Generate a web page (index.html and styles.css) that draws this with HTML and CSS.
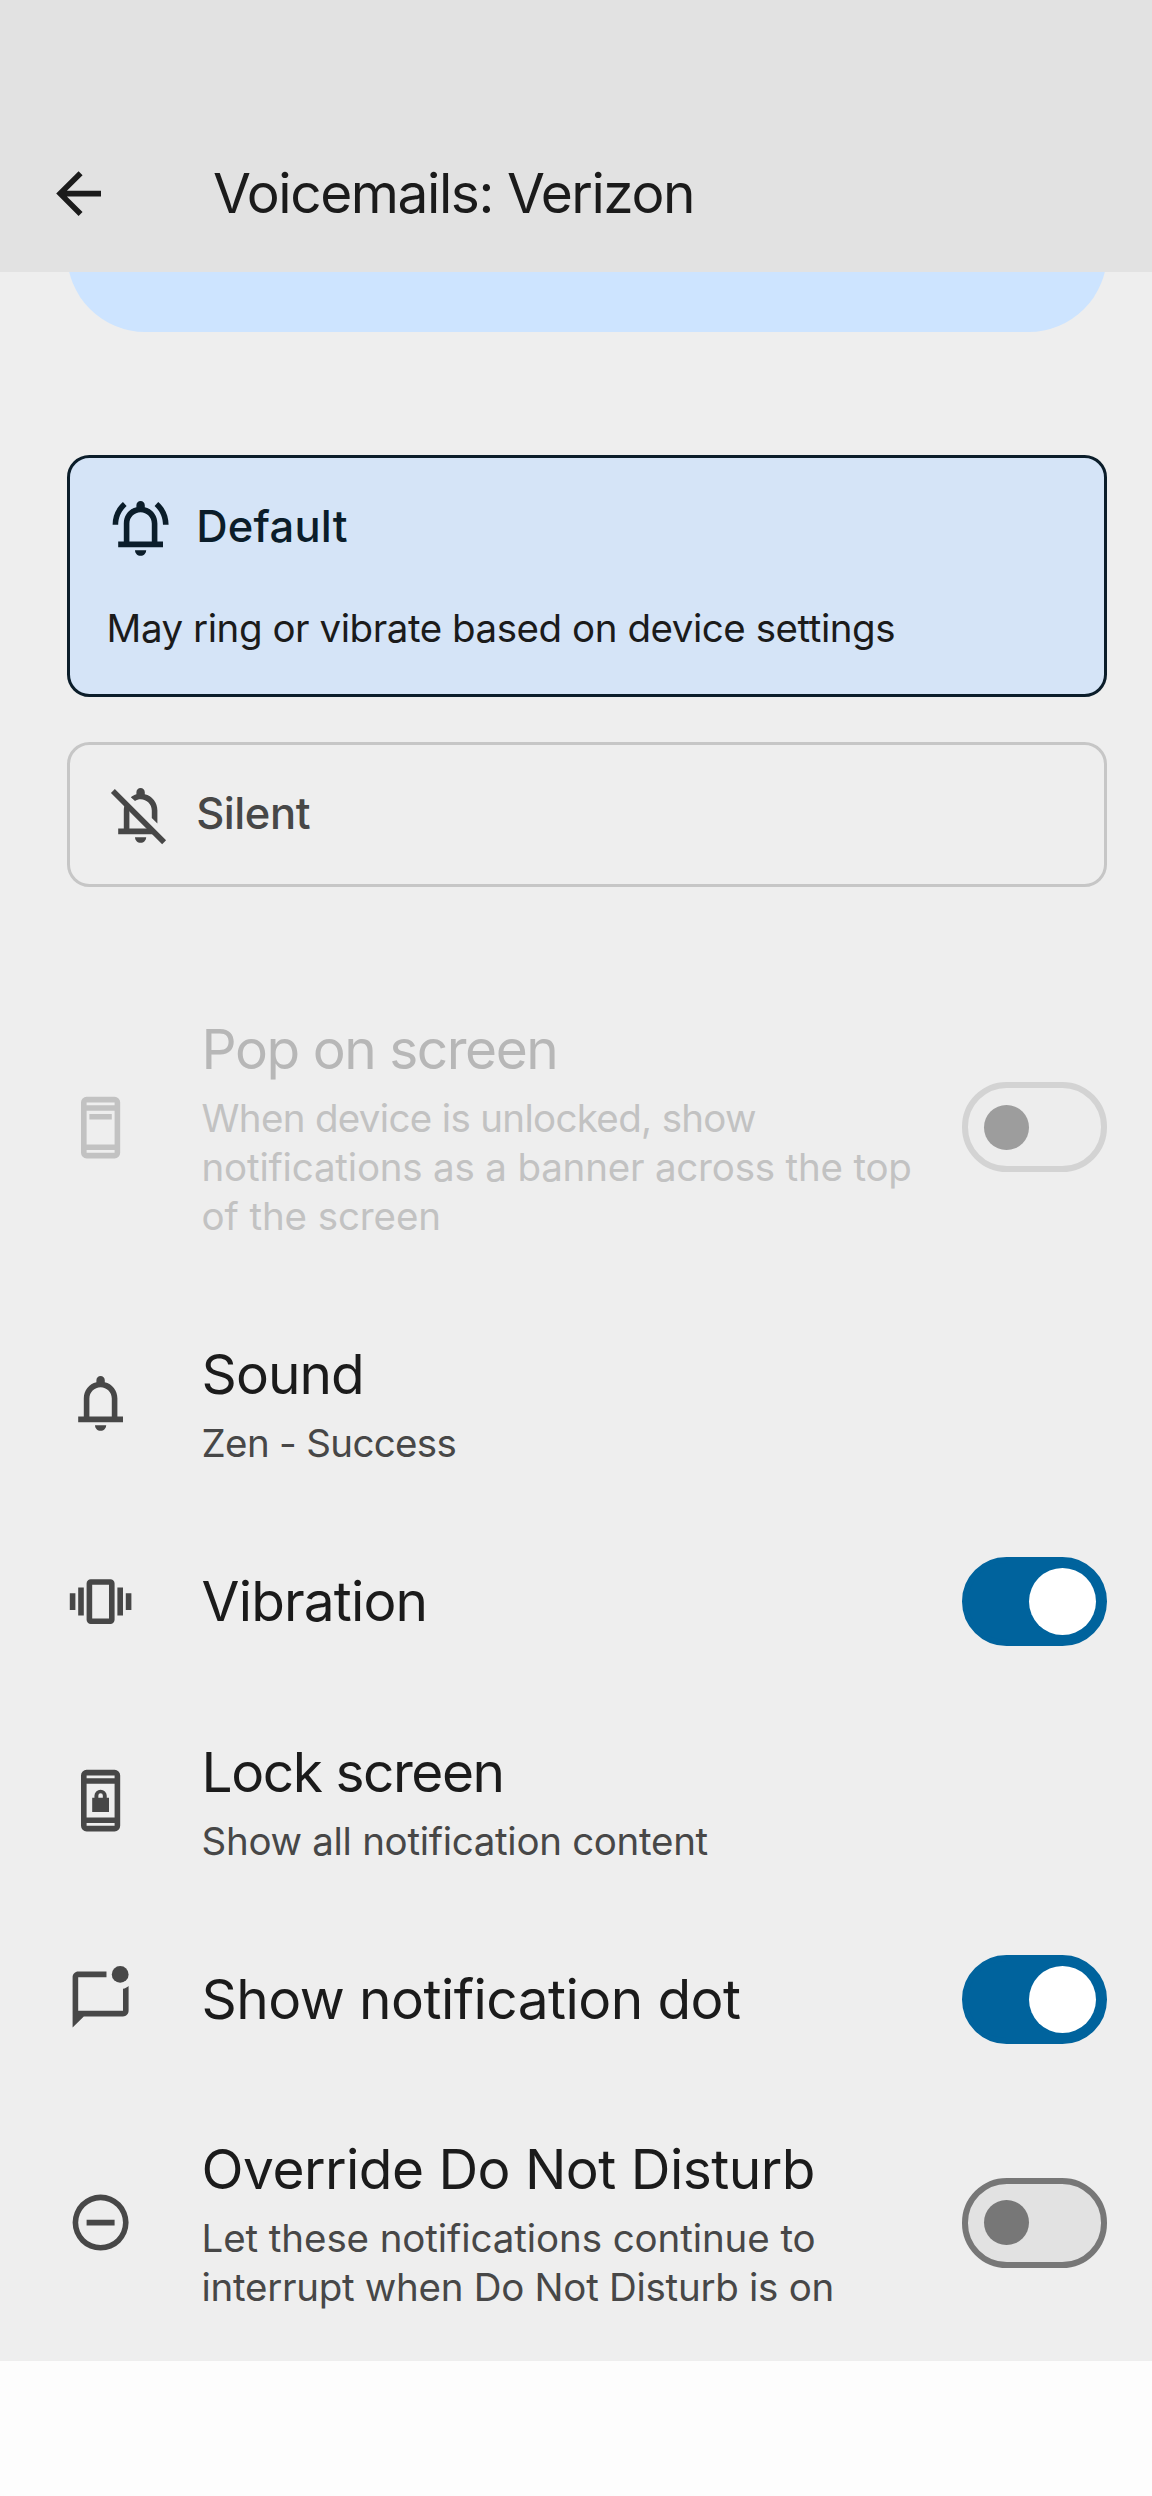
FILE: index.html
```html
<!DOCTYPE html>
<html lang="en">
<head>
<meta charset="utf-8">
<title>Voicemails: Verizon</title>
<link rel="stylesheet" href="styles.css">
</head>
<body>
<header class="app-bar">
  <svg class="icon" viewBox="0 0 24 24"><path d="M20 11H7.83l5.59-5.59L12 4l-8 8 8 8 1.41-1.41L7.83 13H20z"/></svg>
  <h1 class="app-title">Voicemails: Verizon</h1>
</header>
<main class="content">
  <div class="main-switch"></div>

  <section class="choices">
    <div class="choice choice-selected">
      <div class="choice-head">
        <svg class="icon" viewBox="0 0 24 24">
          <path d="M12 22.1c1.1 0 2-.9 2-2h-4c0 1.100.9 2 2 2zM18 17v-6.500c0-2.900-1.900-5.200-4.500-5.800V4c0-.83-.67-1.500-1.500-1.500s-1.500.67-1.500 1.500v.7C7.900 5.300 6 7.600 6 10.500V17H4v2h16v-2zM16 17H8v-6.500c0-2.200 1.800-4 4-4s4 1.800 4 4z"/>
          <path d="M2 11c0-3.300 1.400-6.200 3.700-8.100L7 4.300C5.200 5.900 4 8.300 4 11zM22 11c0-3.300-1.400-6.200-3.700-8.100L17 4.300c1.800 1.600 3 4 3 6.700z"/>
        </svg>
        <span class="choice-title ls-default">Default</span>
      </div>
      <p class="choice-text">May ring or vibrate based on device settings</p>
    </div>
    <div class="choice">
      <div class="choice-head">
        <svg class="icon" viewBox="0 0 24 24">
          <path d="M12 22.100c1.100 0 2-.9 2-2h-4c0 1.100.9 2 2 2z"/>
          <path d="M2.800 2.900 21.100 21.200l-1.400 1.400L1.400 4.300z"/>
          <path d="M4 19v-2h2v-6.500c0-.7.1-1.400.4-2L8 10.100V17h6.800l2 2z"/>
          <path d="M8.500 5.800c.6-.5 1.300-.9 2-1.100V4c0-.83.67-1.500 1.500-1.500s1.500.67 1.500 1.500v.7c2.600.6 4.500 2.900 4.500 5.800v4.700l-2-2v-2.700c0-2.200-1.800-4-4-4-.75 0-1.400.2-2 .6z"/>
        </svg>
        <span class="choice-title ls-silent">Silent</span>
      </div>
    </div>
  </section>

  <section class="settings">
    <div class="row row-three disabled">
      <svg class="icon" viewBox="0 0 24 24"><path fill-rule="evenodd" d="M7 1h10a2 2 0 0 1 2 2v18a2 2 0 0 1-2 2H7a2 2 0 0 1-2-2V3a2 2 0 0 1 2-2zM7 3v1h10V3zM7 6v12h10V6zM7 20v1h10v-1zM8 7.100h8v2H8z"/></svg>
      <div class="labels">
        <div class="title ls-pop">Pop on screen</div>
        <div class="summary"><span class="ls-when">When device is unlocked, show</span><br><span class="ls-notif">notifications as a banner across the top</span><br><span class="ls-of">of the screen</span></div>
      </div>
      <div class="switch"><span class="thumb"></span></div>
    </div>

    <div class="row row-two">
      <svg class="icon" viewBox="0 0 24 24"><path d="M12 22.100c1.100 0 2-.9 2-2h-4c0 1.100.9 2 2 2zM18 17v-6.500c0-2.900-1.900-5.200-4.500-5.800V4c0-.83-.67-1.500-1.500-1.500s-1.500.67-1.500 1.500v.7C7.900 5.300 6 7.600 6 10.500V17H4v2h16v-2zM16 17H8v-6.500c0-2.200 1.800-4 4-4s4 1.800 4 4z"/></svg>
      <div class="labels">
        <div class="title ls-sound">Sound</div>
        <div class="summary ls-zen">Zen - Success</div>
      </div>
    </div>

    <div class="row row-one">
      <svg class="icon" viewBox="0 0 24 24"><path fill-rule="evenodd" d="M8.500 4h7A1.500 1.500 0 0 1 17 5.500v13a1.500 1.500 0 0 1-1.500 1.500h-7A1.500 1.500 0 0 1 7 18.500v-13A1.500 1.500 0 0 1 8.500 4zM9 6v12h6V6zM4 7h2v10H4zM18 7h2v10h-2zM1 9h2v6H1zM21 9h2v6h-2z"/></svg>
      <div class="labels"><div class="title ls-vibration">Vibration</div></div>
      <div class="switch on"><span class="thumb"></span></div>
    </div>

    <div class="row row-two">
      <svg class="icon" viewBox="0 0 24 24"><path fill-rule="evenodd" d="M7 1h10a2 2 0 0 1 2 2v18a2 2 0 0 1-2 2H7a2 2 0 0 1-2-2V3a2 2 0 0 1 2-2zM7 3v1h10V3zM7 6v12h10V6zM7 20v1h10v-1zM9 11h.8v-.7a2.200 2.200 0 0 1 4.400 0v.7h.8v5.100H9zM11.200 11h1.600v-.8a.8.8 0 0 0-1.600 0z"/></svg>
      <div class="labels">
        <div class="title ls-lock">Lock screen</div>
        <div class="summary ls-showall">Show all notification content</div>
      </div>
    </div>

    <div class="row row-one">
      <svg class="icon" viewBox="0 0 24 24"><path d="M2 22V4c0-1.100.9-2 2-2h10.100v2H4v12h16V8.100c.75-.15 1.400-.5 2-1V16c0 1.100-.9 2-2 2H6z"/><circle cx="19" cy="3" r="3"/></svg>
      <div class="labels"><div class="title ls-dot">Show notification dot</div></div>
      <div class="switch on"><span class="thumb"></span></div>
    </div>

    <div class="row row-dnd">
      <svg class="icon" viewBox="0 0 24 24"><path fill-rule="evenodd" d="M12 2a10 10 0 1 0 0 20 10 10 0 0 0 0-20zM12 4a8 8 0 1 1 0 16 8 8 0 0 1 0-16zM7 11h10v2H7z"/></svg>
      <div class="labels">
        <div class="title ls-override">Override Do Not Disturb</div>
        <div class="summary"><span class="ls-let">Let these notifications continue to</span><br><span class="ls-interrupt">interrupt when Do Not Disturb is on</span></div>
      </div>
      <div class="switch"><span class="thumb"></span></div>
    </div>
  </section>
</main>
</body>
</html>
```
FILE: styles.css
```css
* { box-sizing: border-box; }

body {
  margin: 0;
  height: 2496px;
  background: #fdfdfd;
  color: #1b1b1b;
  font-family: Inter, Roboto, sans-serif;
  overflow: hidden;
}

.icon {
  width: 67.2px;
  height: 67.2px;
  flex: none;
  overflow: visible;
  fill: currentColor;
}

/* App bar */
.app-bar {
  display: flex;
  align-items: center;
  gap: 101px;
  height: 272px;
  padding: 115.2px 44.8px 0;
  background: #e2e2e2;
}
.app-title {
  margin: 0;
  padding-bottom: 2px;
  font-size: 55px;
  font-weight: 400;
  line-height: 72px;
  letter-spacing: -1.42px;
  white-space: nowrap;
}

/* Scrolled content */
.content {
  height: 2089px;
  overflow: hidden;
  background: #eee;
}
.main-switch {
  height: 180px;
  margin: -120.3px 44.8px 0 67.2px;
  border-radius: 78.4px;
  background: #cde4ff;
}

/* Importance choices */
.choices {
  display: flex;
  flex-direction: column;
  gap: 44.5px;
  margin: 123.3px 44.8px 78px 67.2px;
}
.choice {
  height: 145.5px;
  padding: 36.4px 36.4px 0;
  border: 3px solid #c6c6c6;
  border-radius: 22.4px;
  color: #474747;
}
.choice-selected {
  height: 242px;
  border-color: #0b1d2a;
  background: #d5e4f7;
  color: #0b1d2a;
}
.choice-head {
  display: flex;
  align-items: center;
  gap: 22.4px;
}
.choice-title {
  padding-bottom: 3px;
  font-size: 43.5px;
  font-weight: 500;
  line-height: 56px;
}
.choice-text {
  margin: 42.8px 0 0;
  color: #1b1b1b;
  font-size: 38.5px;
  line-height: 49px;
  letter-spacing: -.45px;
  white-space: nowrap;
}

/* Settings rows */
.row {
  display: flex;
  align-items: center;
  padding: 0 44.8px 0 67.2px;
  color: #474747;
}
.row-one { height: 171.6px; }
.row-two { height: 226.4px; }
.row-three { height: 324.5px; }
.row-dnd { height: 274.5px; }
.labels {
  flex: 1;
  min-width: 0;
  margin-left: 67.2px;
  white-space: nowrap;
}
.title {
  color: #1b1b1b;
  font-size: 55px;
  line-height: 72px;
}
.row-one .title { padding-bottom: 1.5px; }
.summary {
  margin-top: 9px;
  font-size: 38.5px;
  line-height: 49px;
}

.switch {
  display: flex;
  align-items: center;
  flex: none;
  width: 145.6px;
  height: 89.6px;
  padding-left: 16.4px;
  border: 6px solid #777;
  border-radius: 44.8px;
  background: #e2e2e2;
}
.thumb {
  width: 44.8px;
  height: 44.8px;
  border-radius: 50%;
  background: #777;
}
.switch.on {
  justify-content: flex-end;
  padding: 0 5.2px 0 0;
  border-color: #00639d;
  background: #00639d;
}
.switch.on .thumb {
  width: 67.2px;
  height: 67.2px;
  background: #fff;
}

.disabled { color: #c2c2c2; }
.disabled .title { color: #b7b7b7; }
.disabled .switch { border-color: #d3d3d3; background: #ededed; }
.disabled .thumb { background: #9d9d9d; }

/* Tracking per label */
.ls-default { letter-spacing: .22px; }
.ls-silent { letter-spacing: -.45px; }
.ls-pop { letter-spacing: -1.46px; }
.ls-when { letter-spacing: -.67px; }
.ls-notif { letter-spacing: -.19px; }
.ls-of { letter-spacing: -.1px; }
.ls-sound { letter-spacing: -.97px; }
.ls-zen { letter-spacing: -.67px; }
.ls-vibration { letter-spacing: -.85px; }
.ls-lock { letter-spacing: -1.45px; }
.ls-showall { letter-spacing: -.3px; }
.ls-dot { letter-spacing: -.55px; }
.ls-override { letter-spacing: -.53px; }
.ls-let { letter-spacing: -.09px; }
.ls-interrupt { letter-spacing: -.28px; }
```
